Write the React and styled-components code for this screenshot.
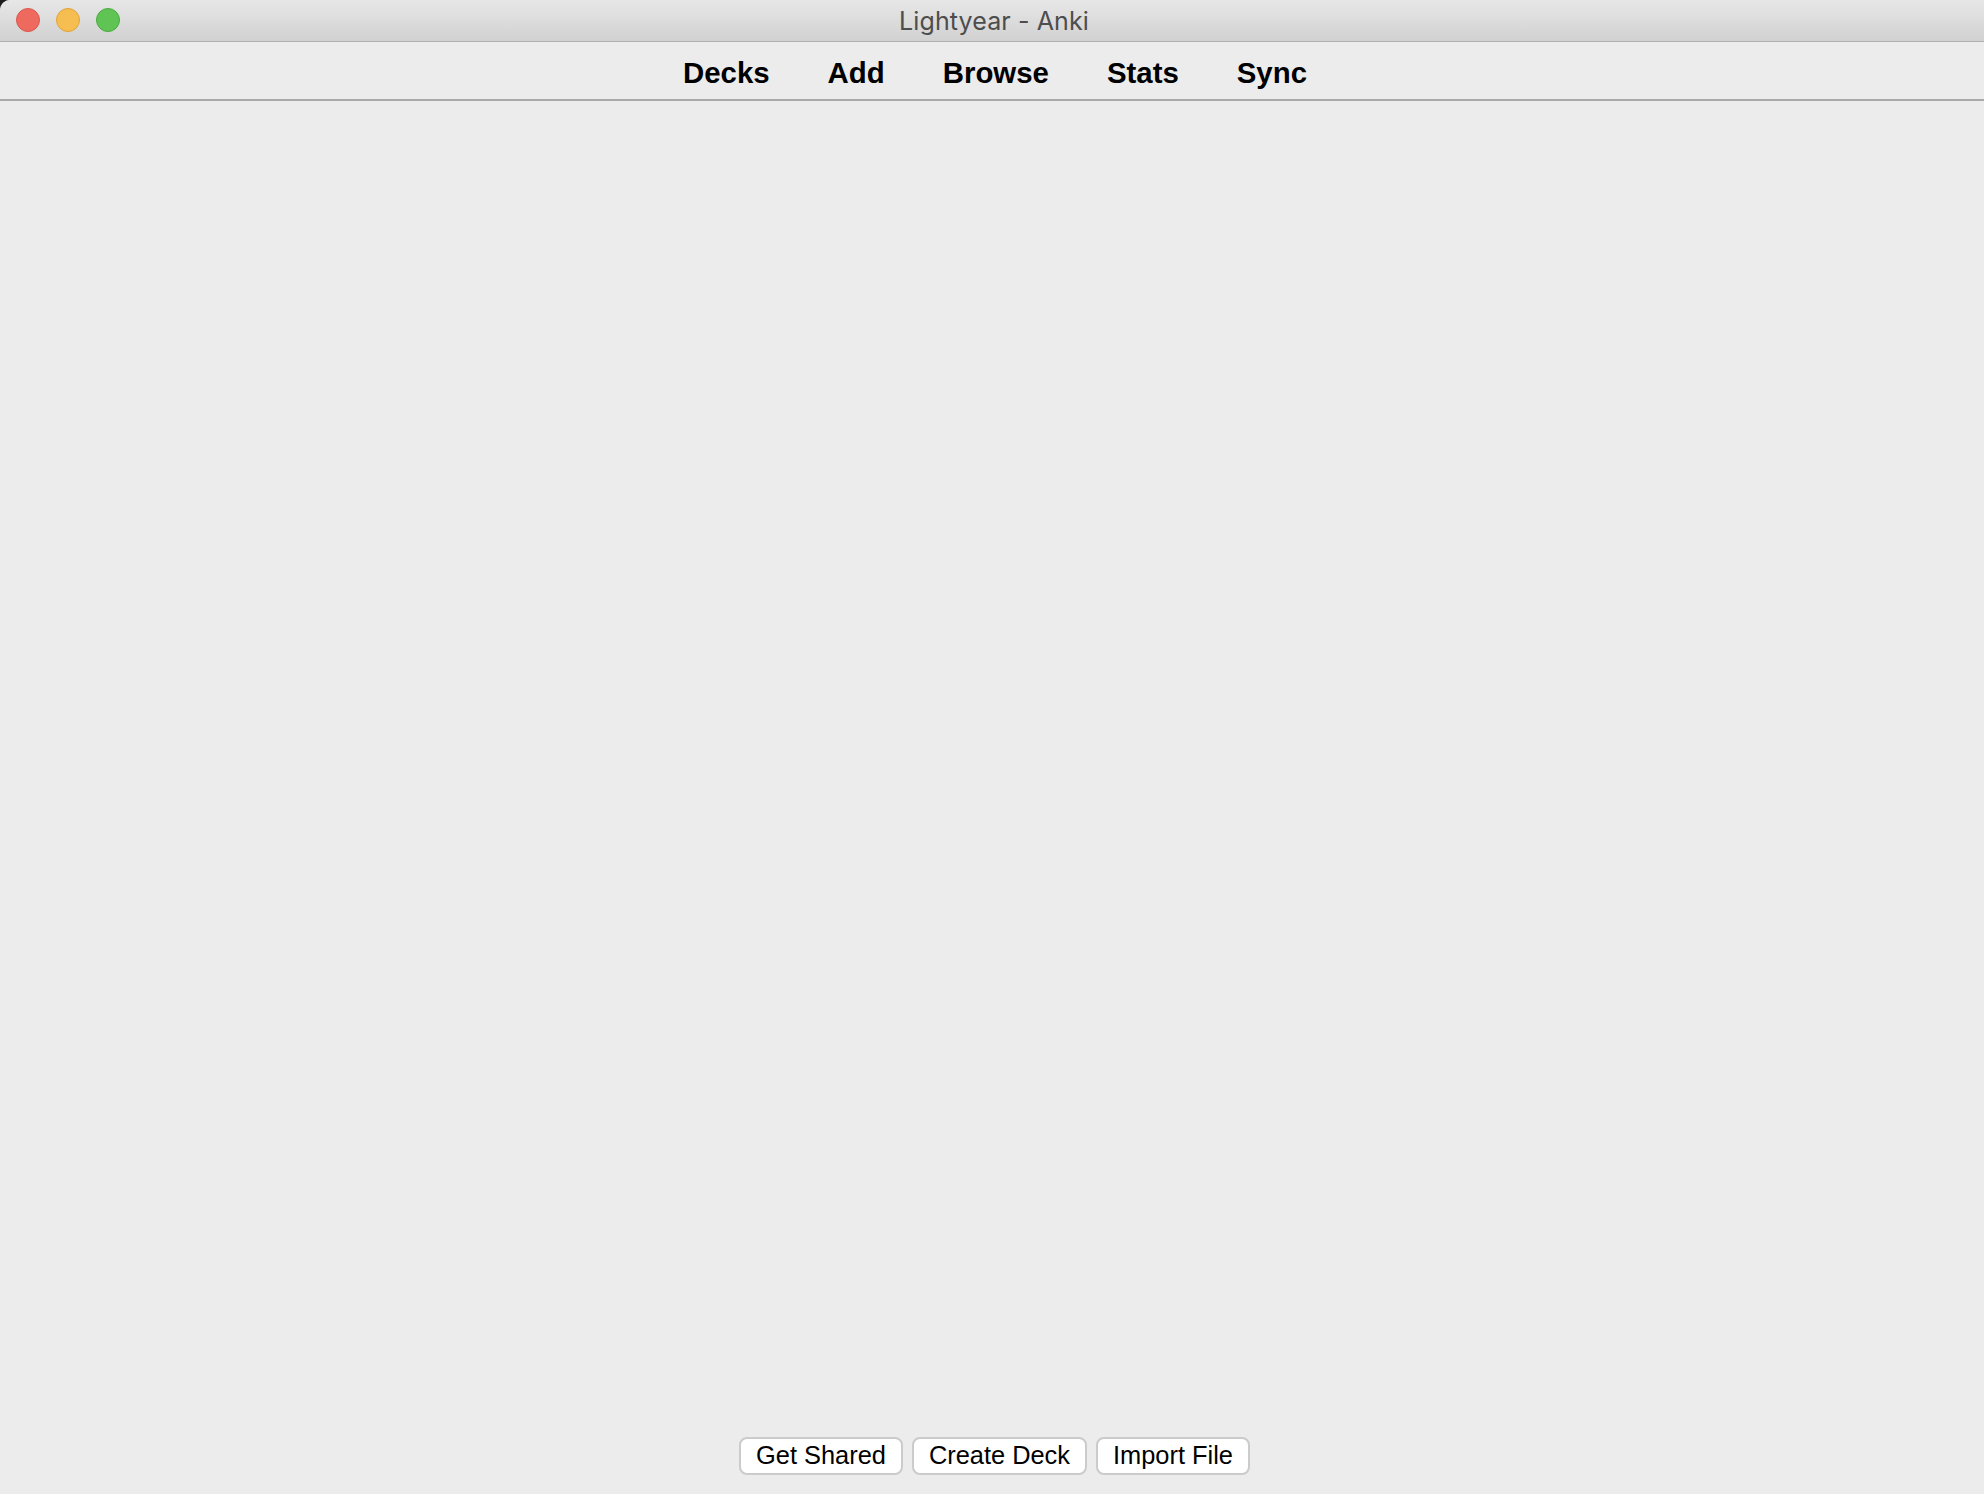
import React from "react";
import styled, { createGlobalStyle } from "styled-components";

const Global = createGlobalStyle`
  html, body { margin: 0; padding: 0; background: #1e1e1e; }
  #root { height: 100vh; }
`;

const Window = styled.div`
  height: 100vh;
  display: flex;
  flex-direction: column;
  background: #ececec;
  border-top-left-radius: 10px;
  overflow: hidden;
`;

const TitleBar = styled.div`
  position: relative;
  height: 41px;
  flex: 0 0 41px;
  display: flex;
  align-items: center;
  justify-content: center;
  background: linear-gradient(#e7e7e7, #d1d1d1);
  border-bottom: 1px solid #b0b0b0;
`;

const Lights = styled.div`
  position: absolute;
  left: 16px;
  top: 8px;
  display: flex;
  gap: 16px;
`;

const Light = styled.span`
  width: 24px;
  height: 24px;
  box-sizing: border-box;
  border-radius: 50%;
  background: ${(p) => p.$bg};
  border: 1px solid ${(p) => p.$bd};
`;

const Title = styled.div`
  font-family: Inter, "Liberation Sans", sans-serif;
  font-size: 25px;
  color: #4d4d4d;
  margin-left: 4px;
  letter-spacing: 0.1px;
`;

const Toolbar = styled.nav`
  height: 57px;
  flex: 0 0 57px;
  display: flex;
  align-items: center;
  justify-content: center;
  gap: 58px;
  padding-left: 6px;
  border-bottom: 2px solid #a9a9a9;
`;

const NavLink = styled.span`
  font-family: "Liberation Sans", Arial, sans-serif;
  font-weight: bold;
  font-size: 29.4px;
  color: #000;
  margin-top: 4px;
`;

const Main = styled.main`
  flex: 1;
`;

const Footer = styled.div`
  display: flex;
  justify-content: center;
  gap: 9px;
  padding: 0 0 19px 5px;
`;

const Button = styled.button`
  height: 38px;
  box-sizing: border-box;
  padding: 0 15px;
  background: #fff;
  border: 2px solid #cbcbcb;
  border-radius: 8px;
  font-family: "Liberation Sans", Arial, sans-serif;
  font-size: 25.4px;
  color: #000;
  line-height: 1;
  display: flex;
  align-items: center;
`;

export default function App() {
  return (
    <>
      <Global />
      <Window>
        <TitleBar>
          <Lights>
            <Light $bg="#ee6a5f" $bd="#d8584d" />
            <Light $bg="#f6be50" $bd="#dea33a" />
            <Light $bg="#5fc454" $bd="#4caa41" />
          </Lights>
          <Title>Lightyear - Anki</Title>
        </TitleBar>
        <Toolbar>
          {["Decks", "Add", "Browse", "Stats", "Sync"].map((t) => (
            <NavLink key={t}>{t}</NavLink>
          ))}
        </Toolbar>
        <Main />
        <Footer>
          <Button>Get Shared</Button>
          <Button>Create Deck</Button>
          <Button>Import File</Button>
        </Footer>
      </Window>
    </>
  );
}
